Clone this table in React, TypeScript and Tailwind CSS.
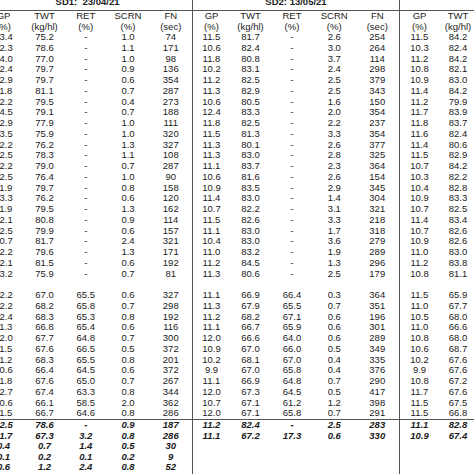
import React from "react";

type Row = string[];

const sd1Top: Row[] = [
  ["13.4", "75.2", "-", "1.0", "74"],
  ["12.3", "78.6", "-", "1.1", "171"],
  ["14.0", "77.0", "-", "1.0", "98"],
  ["12.4", "79.7", "-", "0.9", "136"],
  ["12.9", "79.7", "-", "0.6", "354"],
  ["11.8", "81.1", "-", "0.7", "287"],
  ["12.2", "79.5", "-", "0.4", "273"],
  ["14.5", "79.1", "-", "0.7", "188"],
  ["12.9", "77.9", "-", "1.0", "111"],
  ["13.5", "75.9", "-", "1.0", "320"],
  ["12.2", "76.2", "-", "1.3", "327"],
  ["12.5", "78.3", "-", "1.1", "108"],
  ["12.2", "79.0", "-", "0.7", "287"],
  ["12.5", "76.4", "-", "1.0", "90"],
  ["11.9", "79.7", "-", "0.8", "158"],
  ["13.3", "76.2", "-", "0.6", "120"],
  ["11.9", "79.5", "-", "1.3", "162"],
  ["12.1", "80.8", "-", "0.9", "114"],
  ["12.5", "79.9", "-", "0.6", "157"],
  ["10.7", "81.7", "-", "2.4", "321"],
  ["12.2", "79.6", "-", "1.3", "171"],
  ["12.1", "81.5", "-", "0.6", "192"],
  ["13.2", "75.9", "-", "0.7", "81"],
];
const sd1Bottom: Row[] = [
  ["12.2", "67.0", "65.5", "0.6", "327"],
  ["12.2", "68.2", "65.8", "0.7", "298"],
  ["12.4", "68.3", "65.3", "0.8", "192"],
  ["11.3", "66.8", "65.4", "0.6", "116"],
  ["12.0", "67.7", "64.8", "0.7", "300"],
  ["11.5", "67.6", "66.5", "0.5", "372"],
  ["11.2", "68.3", "65.5", "0.8", "201"],
  ["10.6", "66.4", "64.5", "0.6", "372"],
  ["11.8", "67.6", "65.0", "0.7", "267"],
  ["12.7", "67.4", "63.3", "0.8", "344"],
  ["10.6", "66.1", "58.5", "2.0", "362"],
  ["11.5", "66.7", "64.6", "0.8", "286"],
];
const sd1Stats: Row[] = [
  ["12.5", "78.6", "-", "0.9", "187"],
  ["11.7", "67.3", "3.2", "0.8", "286"],
  ["0.4", "0.7", "1.4", "0.5", "30"],
  ["0.1", "0.2", "0.1", "0.2", "9"],
  ["0.6", "1.2", "2.4", "0.8", "52"],
];

const sd2Top: Row[] = [
  ["11.5", "81.7", "-", "2.6", "254"],
  ["10.6", "82.4", "-", "3.0", "264"],
  ["11.8", "80.8", "-", "3.7", "114"],
  ["10.2", "83.1", "-", "2.4", "298"],
  ["11.2", "82.5", "-", "2.5", "379"],
  ["11.3", "82.9", "-", "2.5", "343"],
  ["10.6", "80.5", "-", "1.6", "150"],
  ["12.4", "83.3", "-", "2.0", "354"],
  ["11.8", "82.5", "-", "2.2", "237"],
  ["11.5", "81.3", "-", "3.3", "354"],
  ["11.3", "80.1", "-", "2.6", "377"],
  ["11.3", "83.0", "-", "2.8", "325"],
  ["11.1", "83.7", "-", "2.3", "364"],
  ["10.6", "81.6", "-", "2.6", "154"],
  ["10.9", "83.5", "-", "2.9", "345"],
  ["11.4", "83.0", "-", "1.4", "304"],
  ["10.7", "82.2", "-", "3.1", "321"],
  ["11.5", "82.6", "-", "3.3", "218"],
  ["11.1", "83.0", "-", "1.7", "318"],
  ["10.4", "83.0", "-", "3.6", "279"],
  ["11.0", "83.2", "-", "1.9", "289"],
  ["11.2", "84.5", "-", "1.3", "296"],
  ["11.3", "80.6", "-", "2.5", "179"],
];
const sd2Bottom: Row[] = [
  ["11.1", "66.9", "66.4", "0.3", "364"],
  ["11.3", "67.9", "65.5", "0.7", "351"],
  ["11.2", "68.2", "67.1", "0.6", "196"],
  ["11.1", "66.7", "65.9", "0.6", "301"],
  ["12.0", "66.6", "64.0", "0.6", "289"],
  ["10.9", "67.0", "66.0", "0.5", "349"],
  ["10.2", "68.1", "67.0", "0.4", "335"],
  ["9.9", "67.0", "65.8", "0.4", "376"],
  ["11.1", "66.9", "64.8", "0.7", "290"],
  ["12.0", "67.3", "64.5", "0.5", "417"],
  ["10.7", "67.1", "61.2", "1.2", "398"],
  ["12.0", "67.1", "65.8", "0.7", "291"],
];
const sd2Stats: Row[] = [
  ["11.2", "82.4", "-", "2.5", "283"],
  ["11.1", "67.2", "17.3", "0.6", "330"],
  ["", "", "", "", ""],
  ["", "", "", "", ""],
  ["", "", "", "", ""],
];

const sd3Top: Row[] = [
  ["11.5", "84.2"],
  ["10.3", "82.4"],
  ["11.2", "84.2"],
  ["10.8", "82.1"],
  ["10.9", "83.0"],
  ["11.4", "84.2"],
  ["11.2", "79.9"],
  ["11.7", "83.9"],
  ["11.8", "83.7"],
  ["11.6", "82.4"],
  ["11.4", "80.6"],
  ["11.5", "82.9"],
  ["10.7", "84.2"],
  ["10.3", "82.2"],
  ["10.4", "82.8"],
  ["10.9", "83.3"],
  ["10.7", "82.5"],
  ["11.4", "83.4"],
  ["10.7", "82.6"],
  ["10.9", "82.6"],
  ["11.0", "83.0"],
  ["11.2", "83.8"],
  ["10.8", "81.1"],
];
const sd3Bottom: Row[] = [
  ["11.5", "65.9"],
  ["11.0", "67.7"],
  ["10.5", "68.0"],
  ["11.0", "66.6"],
  ["10.8", "68.0"],
  ["10.6", "68.7"],
  ["10.2", "67.6"],
  ["9.9", "67.6"],
  ["10.8", "67.2"],
  ["11.7", "67.6"],
  ["11.5", "67.5"],
  ["11.5", "66.8"],
];
const sd3Stats: Row[] = [
  ["11.1", "82.8"],
  ["10.9", "67.4"],
  ["", ""],
  ["", ""],
  ["", ""],
];

type BlockProps = {
  title: string;
  widths: string[];
  heads: string[];
  units: string[];
  top: Row[];
  bottom: Row[];
  stats: Row[];
  divider?: boolean;
};

function Cells({ row, widths }: { row: string[]; widths: string[] }) {
  return (
    <>
      {row.map((v, i) => (
        <div key={i} className={`${widths[i]} shrink-0 text-center whitespace-nowrap`}>
          {v}
        </div>
      ))}
    </>
  );
}

function Block({ title, widths, heads, units, top, bottom, stats, divider }: BlockProps) {
  return (
    <div className={divider ? "flex flex-col shrink-0 border-l border-[#555]" : "flex flex-col shrink-0"}>
      <div className="h-[13px] border-b border-[#555] leading-[8px] text-center font-bold whitespace-pre">
        {title}
      </div>
      <div className="flex h-[10.5px] leading-[10.5px]">
        <Cells row={heads} widths={widths} />
      </div>
      <div className="flex h-[10.5px] leading-[10.5px]">
        <Cells row={units} widths={widths} />
      </div>
      {top.map((r, i) => (
        <div key={`t${i}`} className="flex h-[10.75px] leading-[10.75px]">
          <Cells row={r} widths={widths} />
        </div>
      ))}
      <div className="h-[10.75px]" />
      {bottom.map((r, i) => (
        <div key={`b${i}`} className="flex h-[10.75px] leading-[10.75px]">
          <Cells row={r} widths={widths} />
        </div>
      ))}
      <div className="border-t border-[#555] font-bold italic">
        {stats.map((r, i) => (
          <div key={`s${i}`} className="flex h-[10.6px] leading-[10.6px]">
            <Cells row={r} widths={widths} />
          </div>
        ))}
      </div>
    </div>
  );
}

export default function App() {
  return (
    <div className="w-[474px] h-[474px] overflow-hidden bg-white">
      <div className="flex -ml-[17px] -mt-[2px] h-[490px] font-['Liberation_Sans',Arial,sans-serif] text-[9.5px] text-[#1a1a1a]">
        <Block
          title="SD1:  23/04/21"
          widths={["w-[41px]", "w-[41px]", "w-[41.5px]", "w-[43px]", "w-[42.5px]"]}
          heads={["GP", "TWT", "RET", "SCRN", "FN"]}
          units={["(%)", "(kg/hl)", "(%)", "(%)", "(sec)"]}
          top={sd1Top}
          bottom={sd1Bottom}
          stats={sd1Stats}
        />
        <Block
          title="SD2: 13/05/21"
          widths={["w-[37px]", "w-[41px]", "w-[42px]", "w-[42.5px]", "w-[43.5px]"]}
          heads={["GP", "TWT", "RET", "SCRN", "FN"]}
          units={["(%)", "(kg/hl)", "(%)", "(%)", "(sec)"]}
          top={sd2Top}
          bottom={sd2Bottom}
          stats={sd2Stats}
          divider
        />
        <Block
          title=""
          widths={["w-[39px]", "w-[38px]"]}
          heads={["GP", "TWT"]}
          units={["(%)", "(kg/hl)"]}
          top={sd3Top}
          bottom={sd3Bottom}
          stats={sd3Stats}
          divider
        />
      </div>
    </div>
  );
}
